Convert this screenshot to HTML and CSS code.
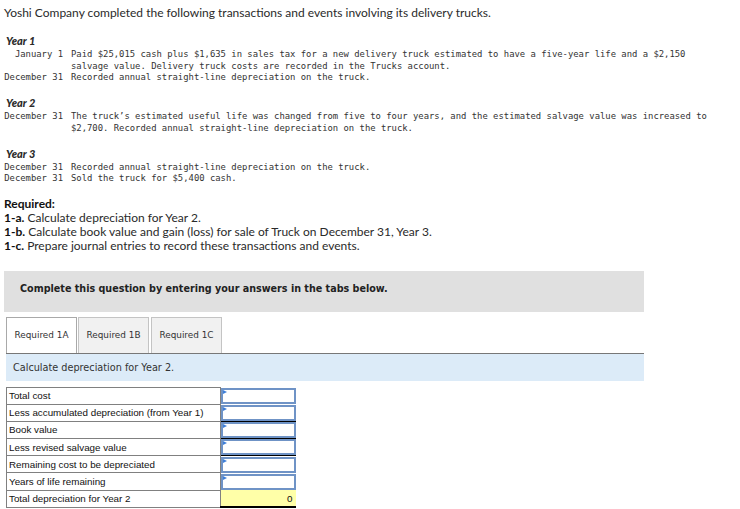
FILE: index.html
```html
<!DOCTYPE html>
<html>
<head>
<meta charset="utf-8">
<link rel="stylesheet" href="styles.css">
</head>
<body>
<div class="page">
  <p class="intro">Yoshi Company completed the following transactions and events involving its delivery trucks.</p>

  <section class="year">
    <h4 class="year-title">Year 1</h4>
    <div class="events">
      <div class="date">January 1</div><div class="desc">Paid $25,015 cash plus $1,635 in sales tax for a new delivery truck estimated to have a five-year life and a $2,150 salvage value. Delivery truck costs are recorded in the Trucks account.</div>
      <div class="date">December 31</div><div class="desc">Recorded annual straight-line depreciation on the truck.</div>
    </div>
  </section>

  <section class="year">
    <h4 class="year-title">Year 2</h4>
    <div class="events">
      <div class="date">December 31</div><div class="desc">The truck’s estimated useful life was changed from five to four years, and the estimated salvage value was increased to $2,700. Recorded annual straight-line depreciation on the truck.</div>
    </div>
  </section>

  <section class="year">
    <h4 class="year-title">Year 3</h4>
    <div class="events">
      <div class="date">December 31</div><div class="desc">Recorded annual straight-line depreciation on the truck.</div>
      <div class="date">December 31</div><div class="desc">Sold the truck for $5,400 cash.</div>
    </div>
  </section>

  <div class="required">
    <div><b>Required:</b></div>
    <div><b>1-a.</b> Calculate depreciation for Year 2.</div>
    <div><b>1-b.</b> Calculate book value and gain (loss) for sale of Truck on December 31, Year 3.</div>
    <div><b>1-c.</b> Prepare journal entries to record these transactions and events.</div>
  </div>

  <div class="notice">Complete this question by entering your answers in the tabs below.</div>

  <div class="tabs">
    <div class="tab active">Required 1A</div>
    <div class="tab">Required 1B</div>
    <div class="tab">Required 1C</div>
  </div>
  <div class="instruction">Calculate depreciation for Year 2.</div>

  <table class="calc">
    <tr><td class="label">Total cost</td><td class="cell"><div class="input"></div></td></tr>
    <tr><td class="label">Less accumulated depreciation (from Year 1)</td><td class="cell"><div class="input"></div></td></tr>
    <tr><td class="label">Book value</td><td class="cell sep"><div class="input"></div></td></tr>
    <tr><td class="label">Less revised salvage value</td><td class="cell sep"><div class="input"></div></td></tr>
    <tr><td class="label">Remaining cost to be depreciated</td><td class="cell sep"><div class="input"></div></td></tr>
    <tr><td class="label">Years of life remaining</td><td class="cell"><div class="input"></div></td></tr>
    <tr><td class="label">Total depreciation for Year 2</td><td class="cell total">0</td></tr>
  </table>
</div>
</body>
</html>
```

FILE: styles.css
```css
* { box-sizing: border-box; }
html, body { margin: 0; padding: 0; background: #fff; }
body { width: 740px; height: 509px; overflow: hidden; }

.page {
  padding: 6px 0 0 4px;
  color: #2a2a2a;
  font-family: Lato, "Liberation Sans", sans-serif;
}

.intro {
  margin: 0;
  font-size: 12px;
  line-height: 14px;
}

.year { margin-top: 13px; }
.year + .year { margin-top: 11.5px; }

.year-title {
  margin: 0 0 0 2px;
  font-size: 11px;
  font-weight: 900;
  font-style: italic;
  line-height: 16px;
}

.events {
  display: grid;
  grid-template-columns: 59px 650px;
  column-gap: 8px;
  font-family: "DejaVu Sans Mono", "Liberation Mono", monospace;
  font-size: 8.9px;
  line-height: 11.5px;
  color: #333;
}
.date { text-align: right; white-space: nowrap; }

.required {
  margin-top: 12px;
  font-size: 12px;
  line-height: 14px;
}
.required b { font-weight: 700; color: #111; }

.notice {
  margin-top: 18px;
  width: 640px;
  height: 41px;
  padding: 11px 0 0 16px;
  background: #e0e0e0;
  font-family: "DejaVu Sans", sans-serif;
  font-weight: bold;
  font-size: 9.6px;
  line-height: 14px;
  color: #222;
}

.tabs {
  margin: 5px 0 0 2px;
  width: 638px;
  display: flex;
  gap: 1px;
  border-bottom: 1px solid #777;
  font-family: "DejaVu Sans", sans-serif;
  font-size: 8.9px;
}
.tab {
  width: 71px;
  height: 36px;
  border: 1px solid #c4c4c4;
  border-bottom: none;
  background: #f1f1f1;
  display: flex;
  align-items: center;
  justify-content: center;
  color: #333;
}
.tab.active { background: #fff; border-color: #a9a9a9; }
.tab + .tab + .tab { margin-left: 1px; }

.instruction {
  margin-left: 2px;
  width: 638px;
  height: 27px;
  padding: 0 0 0 7px;
  background: #dcebf8;
  font-family: "DejaVu Sans", sans-serif;
  font-size: 9.7px;
  line-height: 27px;
  color: #333;
}

.calc {
  margin: 6px 0 0 2px;
  border-collapse: collapse;
  font-family: "Liberation Sans", Arial, sans-serif;
  font-size: 9.8px;
  color: #111;
}
.calc td { height: 17.2px; padding: 0; }
.label {
  width: 214px;
  border: 1px solid #808080;
  padding: 0 0 0 2px !important;
}
.cell {
  width: 75px;
  border: none;
  padding: 0 !important;
  vertical-align: middle;
}
.cell.sep { border-top: 1px solid #000; }
.input {
  position: relative;
  height: 16px;
  border: 2px solid #6f93c6;
  background: #fff;
}
.input::before {
  content: "";
  position: absolute;
  left: 0;
  top: 0;
  border-left: 4px solid #3f7fd8;
  border-top: 2px solid transparent;
  border-bottom: 2px solid transparent;
}
.cell.total {
  background: #ffffa8;
  border-bottom: 2px solid #000;
  text-align: right;
  padding-right: 3px !important;
}
```
